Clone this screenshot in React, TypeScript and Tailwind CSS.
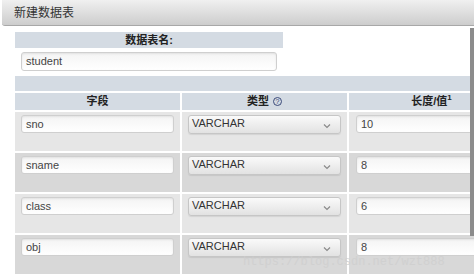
import React from "react";

const rows = [
  { name: "sno", len: "10" },
  { name: "sname", len: "8" },
  { name: "class", len: "6" },
  { name: "obj", len: "8" },
];

const TextBox = ({ value, className }: { value: string; className: string }) => (
  <div
    className={`h-[18px] rounded-[3px] border border-[#cfcfcf] bg-gradient-to-b from-[#f4f4f4] to-white pl-[4px] text-[11px] leading-[16px] text-[#444] shadow-[inset_0_1px_2px_rgba(0,0,0,0.08)] ${className}`}
  >
    {value}
  </div>
);

const Chevron = () => (
  <svg width="8" height="6" viewBox="0 0 8 6" className="absolute right-[9px] top-[7px]">
    <path d="M1 1.5 L4 4.5 L7 1.5" fill="none" stroke="#8a8a8a" strokeWidth="1.2" />
  </svg>
);

export default function App() {
  return (
    <div className="relative w-[474px] h-[276px] overflow-hidden bg-white font-['Liberation_Sans','Noto_Sans_CJK_SC',sans-serif]">
      {/* title bar */}
      <div className="ml-[2px] flex h-[26px] items-center rounded-bl-[3px] border-b border-[#a8a8a8] bg-gradient-to-b from-[#f0f0f0] to-[#cdcdcd] pl-[12px] text-[12px] text-[#333]">
        新建数据表
      </div>

      <div className="pl-[15px] pt-[6px]">
        <div className="flex h-[16px] w-[268px] items-center justify-center bg-[#d4dbe3] text-[11px] font-bold text-[#222]">
          数据表名:
        </div>
        <div className="pl-[6px] pt-[4px]">
          <TextBox value="student" className="w-[256px] h-[19px] leading-[17px]" />
        </div>

        <div className="mt-[5px] h-[15px] w-[520px] bg-[#d4dbe3]" />

        <div className="mt-[2px] grid w-[520px] grid-cols-[165px_165px_165px] gap-x-[2px] gap-y-[2px]">
          <div className="flex h-[17px] items-center justify-center bg-[#d4dbe3] text-[11px] font-bold text-[#222]">
            字段
          </div>
          <div className="flex h-[17px] items-center justify-center gap-[4px] bg-[#d4dbe3] text-[11px] font-bold text-[#222]">
            类型
            <span className="flex h-[9px] w-[9px] items-center justify-center rounded-full border border-[#3b4a7a] text-[7px] leading-none font-normal text-[#3b4a7a]">
              ?
            </span>
          </div>
          <div className="flex h-[17px] items-center justify-center bg-[#d4dbe3] text-[11px] font-bold text-[#222]">
            长度/值<sup className="text-[8px]">1</sup>
          </div>

          {rows.map((r, i) => {
            const bg = i % 2 === 0 ? "bg-[#e6e6e6]" : "bg-[#d8d8d8]";
            return (
              <React.Fragment key={r.name}>
                <div className={`h-[39px] pl-[6px] pt-[3px] ${bg}`}>
                  <TextBox value={r.name} className="w-[153px]" />
                </div>
                <div className={`h-[39px] pl-[6px] pt-[3px] ${bg}`}>
                  <div className="relative h-[19px] w-[153px] rounded-[3px] border border-[#c6c6c6] bg-gradient-to-b from-[#fafafa] to-[#e2e2e2] pl-[3px] text-[11px] leading-[15px] text-[#333] shadow-[0_1px_1px_rgba(0,0,0,0.08)]">
                    VARCHAR
                    <Chevron />
                  </div>
                </div>
                <div className={`h-[39px] pl-[7px] pt-[3px] ${bg}`}>
                  <TextBox value={r.len} className="w-[150px]" />
                </div>
              </React.Fragment>
            );
          })}
        </div>
      </div>

      {/* scrollbar thumb */}
      <div className="absolute right-0 top-[28px] h-[208px] w-[4px] bg-[#8c8c8c]" />

      {/* watermark */}
      <div className="absolute left-[243px] top-[256px] font-['Liberation_Mono',monospace] text-[12px] leading-[12px] text-[#cfcfcf] opacity-80">
        https://blog.csdn.net/wzt888
      </div>
    </div>
  );
}
